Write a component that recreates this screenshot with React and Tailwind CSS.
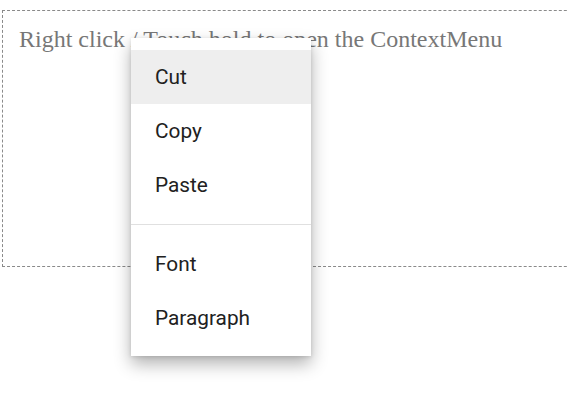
import React from "react";

const groups = [["Cut", "Copy", "Paste"], ["Font", "Paragraph"]];

const MenuItem = ({ label, active }) => (
  <li
    className={
      "h-[54px] flex items-center pl-6 pt-[2px] text-[20.8px] text-[#212121] " +
      (active ? "bg-[#eeeeee]" : "bg-white")
    }
  >
    {label}
  </li>
);

export default function App() {
  return (
    <div className="relative w-full h-[401px] overflow-hidden bg-white">
      <div
        className="ml-[2px] mt-[10px] w-[620px] h-[257px] border border-dashed border-[#8a8a8a] pl-4 pt-[14px] text-[24px] leading-[28px] text-[#777777]"
        style={{ fontFamily: '"Liberation Serif", "Times New Roman", serif' }}
      >
        Right click / Touch hold to open the ContextMenu
      </div>

      {/* context menu */}
      <div
        className="absolute left-[131px] top-[38px] w-[180px] bg-white pt-3 pb-[11px] shadow-[0_8px_16px_rgba(0,0,0,0.3),0_1px_4px_rgba(0,0,0,0.12)]"
        style={{ fontFamily: "Roboto, sans-serif" }}
      >
        <ul>
          {groups[0].map((g, i) => (
            <MenuItem key={g} label={g} active={i === 0} />
          ))}
        </ul>
        <div className="my-3 h-px bg-[#e0e0e0]"></div>
        <ul>
          {groups[1].map((g) => (
            <MenuItem key={g} label={g} />
          ))}
        </ul>
      </div>
    </div>
  );
}
